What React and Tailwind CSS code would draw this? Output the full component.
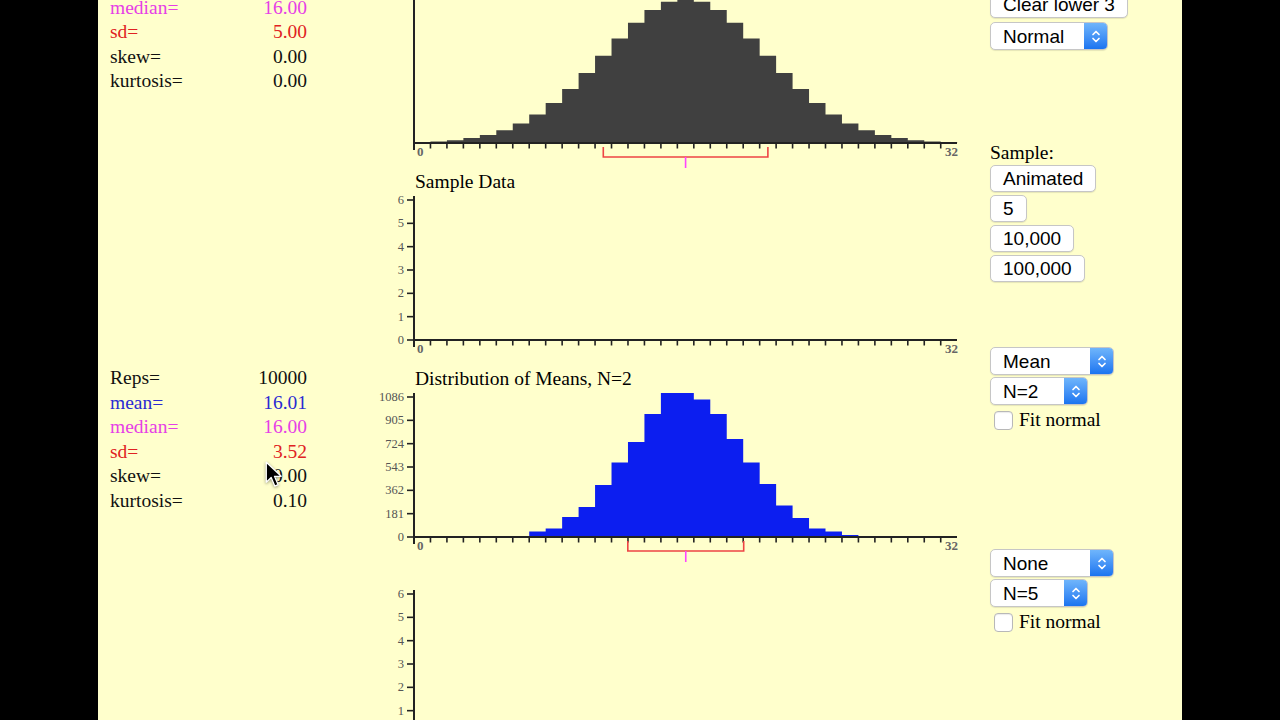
import React from 'react';

const STEP = 16.46;
const xv = (v) => 44 + (v + 0.5) * STEP;
const AXIS_Y = 146;
const ROW_GAP = 140 / 6;

// parent population, normal(16, 5)
const parentBars = Array.from({ length: 33 }, (_, v) => [v, 144 * Math.exp(-((v - 16) ** 2) / 50)]);

// distribution of means, N=2 (pixel heights)
const meanBars = [
  [6, 0.8], [7, 5.4], [8, 8.4], [9, 20], [10, 30], [11, 52], [12, 74.5], [13, 95], [14, 123],
  [15, 144], [16, 144], [17, 137.5], [18, 123], [19, 98], [20, 74.5], [21, 53], [22, 31.5],
  [23, 19], [24, 8.4], [25, 5.4], [26, 2], [27, 0.8],
];

// one stepped outline so neighbouring bars don't show seams
function barsPath(bars) {
  let d = `M${xv(bars[0][0] - 0.5)},${AXIS_Y}`;
  bars.forEach(([v, h]) => {
    d += ` L${xv(v - 0.5)},${AXIS_Y - h} L${xv(v + 0.5)},${AXIS_Y - h}`;
  });
  d += ` L${xv(bars[bars.length - 1][0] + 0.5)},${AXIS_Y} Z`;
  return d;
}

function Chart({ title, bars, color, yLabels, mean, sd, axisTop }) {
  const top = axisTop ?? AXIS_Y - 6 * ROW_GAP - 4;
  return (
    <div className="flex flex-col w-[590px] shrink-0">
      <div className="h-[24px] leading-[24px] pl-[45px] text-black">{title}</div>
      <svg width="590" height="173" className="block overflow-visible">
        {bars && <path d={barsPath(bars)} fill={color} />}
        {/* axes */}
        <line x1="44" y1={top} x2="44" y2={AXIS_Y + 7} stroke="#222" strokeWidth="2" />
        <line x1="43" y1={AXIS_Y} x2="587" y2={AXIS_Y} stroke="#222" strokeWidth="2" />
        {Array.from({ length: 32 }, (_, k) => (
          <line key={k} x1={xv(k + 0.5)} y1={AXIS_Y} x2={xv(k + 0.5)} y2={AXIS_Y + 5.5} stroke="#222" strokeWidth="1.6" />
        ))}
        <text x="47" y={AXIS_Y + 13} fontSize="13" fontWeight="bold" fill="#666" fontFamily="Liberation Serif, serif">0</text>
        <text x="588" y={AXIS_Y + 13} fontSize="13" fontWeight="bold" fill="#666" textAnchor="end" fontFamily="Liberation Serif, serif">32</text>
        {yLabels &&
          yLabels.map((lbl, i) => {
            const y = AXIS_Y - i * ROW_GAP;
            return (
              <g key={i}>
                <line x1="37" y1={y} x2="44" y2={y} stroke="#222" strokeWidth="1.6" />
                <text x="34" y={y + 4} fontSize="12.5" fill="#555" textAnchor="end" fontFamily="Liberation Serif, serif">
                  {lbl}
                </text>
              </g>
            );
          })}
        {mean != null && (
          <g>
            <polyline
              points={`${xv(mean - sd)},${AXIS_Y + 4} ${xv(mean - sd)},${AXIS_Y + 14} ${xv(mean + sd)},${AXIS_Y + 14} ${xv(mean + sd)},${AXIS_Y + 4}`}
              fill="none"
              stroke="#ee4444"
              strokeWidth="1.6"
            />
            <line x1={xv(mean)} y1={AXIS_Y + 14} x2={xv(mean)} y2={AXIS_Y + 25} stroke="#ff44ff" strokeWidth="1.6" />
          </g>
        )}
      </svg>
    </div>
  );
}

function Stats({ rows, className = '' }) {
  return (
    <div className={`w-[272px] shrink-0 pl-[12px] ${className}`}>
      {rows.map(([label, value, color]) => (
        <div key={label} className={`flex justify-between w-[197px] leading-[24.5px] ${color}`}>
          <span>{label}</span>
          <span>{value}</span>
        </div>
      ))}
    </div>
  );
}

const btnBase =
  "h-[27px] bg-white border border-[#c6c6c6] rounded-[5px] text-[19px] leading-none text-black shadow-[0_1px_1px_rgba(0,0,0,0.1)] font-['Liberation_Sans',Arial,sans-serif]";

function Btn({ children, className = '' }) {
  return <button className={`${btnBase} inline-flex items-center px-3 ${className}`}>{children}</button>;
}

function Select({ children, className = '' }) {
  return (
    <div className={`${btnBase} h-[28px] flex items-stretch ${className}`}>
      <span className="flex-1 flex items-center pl-3">{children}</span>
      <span className="w-[23px] rounded-r-[4px] bg-gradient-to-b from-[#6fb5fb] to-[#1a74f0] flex items-center justify-center">
        <svg width="10" height="15" viewBox="0 0 10 15" fill="none" stroke="white" strokeWidth="1.7" strokeLinecap="round" strokeLinejoin="round">
          <path d="M2 5.5 L5 2.5 L8 5.5" />
          <path d="M2 9.5 L5 12.5 L8 9.5" />
        </svg>
      </span>
    </div>
  );
}

function FitNormal({ className = '' }) {
  return (
    <label className={`flex items-center h-[24px] ${className}`}>
      <span className="ml-[4px] w-[19px] h-[19px] bg-white border border-[#b8b8b8] rounded-[4px] shadow-[inset_0_1px_1px_rgba(0,0,0,0.08)]" />
      <span className="ml-[6px] leading-[24px]">Fit normal</span>
    </label>
  );
}

export default function App() {
  const black = 'text-[#111]';
  const blue = 'text-[#2a2ad2]';
  const pink = 'text-[#e63ee6]';
  const red = 'text-[#e02222]';
  const yCounts = ['0', '1', '2', '3', '4', '5', '6'];
  const yMeans = ['0', '181', '362', '543', '724', '905', '1086'];

  return (
    <div className="h-screen overflow-hidden bg-black">
      <div className="relative mx-auto w-[1084px] h-full overflow-hidden bg-[#ffffcc] font-['Liberation_Serif','Times_New_Roman',serif] text-[19.5px] text-black">
        <div className="flex -mt-[27px]">
          {/* stats + charts */}
          <div className="flex flex-col w-[862px] shrink-0">
            <div className="flex h-[197px]">
              <Stats
                className="-mt-[2px]"
                rows={[
                  ['mean=', '16.00', blue],
                  ['median=', '16.00', pink],
                  ['sd=', '5.00', red],
                  ['skew=', '0.00', black],
                  ['kurtosis=', '0.00', black],
                ]}
              />
              <Chart title="" bars={parentBars} color="#404040" mean={16} sd={5} axisTop={0} />
            </div>
            <div className="flex h-[197px]">
              <div className="w-[272px] shrink-0" />
              <Chart title="Sample Data" yLabels={yCounts} />
            </div>
            <div className="flex h-[197px]">
              <Stats
                className="-mt-[1px]"
                rows={[
                  ['Reps=', '10000', black],
                  ['mean=', '16.01', blue],
                  ['median=', '16.00', pink],
                  ['sd=', '3.52', red],
                  ['skew=', '0.00', black],
                  ['kurtosis=', '0.10', black],
                ]}
              />
              <Chart title="Distribution of Means, N=2" bars={meanBars} color="#0c1ef0" yLabels={yMeans} mean={16.01} sd={3.52} />
            </div>
            <div className="flex h-[197px]">
              <div className="w-[272px] shrink-0" />
              <Chart title="" yLabels={yCounts} />
            </div>
          </div>

          {/* controls */}
          <div className="flex flex-col items-start pl-[30px] pt-[18px]">
            <Btn>Clear lower 3</Btn>
            <Select className="mt-[4px] w-[118px]">Normal</Select>
            <div className="mt-[91px] leading-[24px]">Sample:</div>
            <Btn>Animated</Btn>
            <Btn className="mt-[3px]">5</Btn>
            <Btn className="mt-[3px]">10,000</Btn>
            <Btn className="mt-[3px]">100,000</Btn>
            <Select className="mt-[65px] w-[124px]">Mean</Select>
            <Select className="mt-[2px] w-[98px]">N=2</Select>
            <FitNormal className="mt-[3px]" />
            <Select className="mt-[117px] w-[124px]">None</Select>
            <Select className="mt-[2px] w-[98px]">N=5</Select>
            <FitNormal className="mt-[3px]" />
          </div>
        </div>

        {/* mouse pointer */}
        <svg className="absolute left-[167px] top-[461px] drop-shadow-[0_1px_1.5px_rgba(0,0,0,0.4)]" width="18" height="27" viewBox="0 0 14 21">
          <path d="M1 1 L1 16.5 L4.8 12.8 L7.6 19.5 L10.2 18.4 L7.4 11.9 L12.6 11.9 Z" fill="#000" stroke="#fff" strokeWidth="1" strokeLinejoin="round" />
        </svg>
      </div>
    </div>
  );
}
